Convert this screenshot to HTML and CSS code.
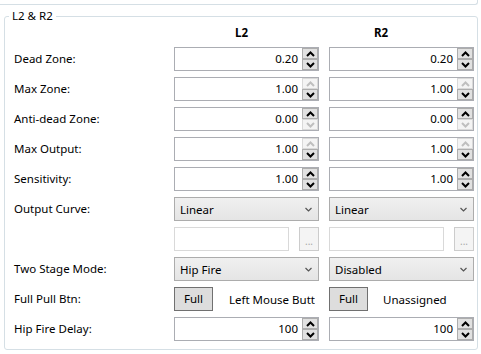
FILE: index.html
```html
<!DOCTYPE html>
<html lang="en">
<head>
  <meta charset="UTF-8" />
  <title>L2 &amp; R2</title>
  <link rel="stylesheet" href="styles.css">
</head>
<body>
  <div class="prev-box"></div>

  <fieldset class="group">
    <legend>L2 &amp; R2</legend>
    <div class="grid">
      <div></div>
      <div class="head head-l">L2</div>
      <div class="head head-r">R2</div>

      <div class="label">Dead Zone:</div>
      <div class="num"><span class="val">0.20</span><span class="spin"><span class="btn"><svg width="9" height="6" viewBox="0 0 9 6"><path d="M1 5 L4.5 1.5 L8 5" fill="none" stroke="currentColor" stroke-width="2"/></svg></span><span class="btn"><svg width="9" height="6" viewBox="0 0 9 6"><path d="M1 1 L4.5 4.5 L8 1" fill="none" stroke="currentColor" stroke-width="2"/></svg></span></span></div>
      <div class="num"><span class="val">0.20</span><span class="spin"><span class="btn"><svg width="9" height="6" viewBox="0 0 9 6"><path d="M1 5 L4.5 1.5 L8 5" fill="none" stroke="currentColor" stroke-width="2"/></svg></span><span class="btn"><svg width="9" height="6" viewBox="0 0 9 6"><path d="M1 1 L4.5 4.5 L8 1" fill="none" stroke="currentColor" stroke-width="2"/></svg></span></span></div>

      <div class="label">Max Zone:</div>
      <div class="num"><span class="val">1.00</span><span class="spin"><span class="btn off"><svg width="9" height="6" viewBox="0 0 9 6"><path d="M1 5 L4.5 1.5 L8 5" fill="none" stroke="currentColor" stroke-width="2"/></svg></span><span class="btn"><svg width="9" height="6" viewBox="0 0 9 6"><path d="M1 1 L4.5 4.5 L8 1" fill="none" stroke="currentColor" stroke-width="2"/></svg></span></span></div>
      <div class="num"><span class="val">1.00</span><span class="spin"><span class="btn off"><svg width="9" height="6" viewBox="0 0 9 6"><path d="M1 5 L4.5 1.5 L8 5" fill="none" stroke="currentColor" stroke-width="2"/></svg></span><span class="btn"><svg width="9" height="6" viewBox="0 0 9 6"><path d="M1 1 L4.5 4.5 L8 1" fill="none" stroke="currentColor" stroke-width="2"/></svg></span></span></div>

      <div class="label">Anti-dead Zone:</div>
      <div class="num"><span class="val">0.00</span><span class="spin"><span class="btn"><svg width="9" height="6" viewBox="0 0 9 6"><path d="M1 5 L4.5 1.5 L8 5" fill="none" stroke="currentColor" stroke-width="2"/></svg></span><span class="btn off"><svg width="9" height="6" viewBox="0 0 9 6"><path d="M1 1 L4.5 4.5 L8 1" fill="none" stroke="currentColor" stroke-width="2"/></svg></span></span></div>
      <div class="num"><span class="val">0.00</span><span class="spin"><span class="btn"><svg width="9" height="6" viewBox="0 0 9 6"><path d="M1 5 L4.5 1.5 L8 5" fill="none" stroke="currentColor" stroke-width="2"/></svg></span><span class="btn off"><svg width="9" height="6" viewBox="0 0 9 6"><path d="M1 1 L4.5 4.5 L8 1" fill="none" stroke="currentColor" stroke-width="2"/></svg></span></span></div>

      <div class="label">Max Output:</div>
      <div class="num"><span class="val">1.00</span><span class="spin"><span class="btn off"><svg width="9" height="6" viewBox="0 0 9 6"><path d="M1 5 L4.5 1.5 L8 5" fill="none" stroke="currentColor" stroke-width="2"/></svg></span><span class="btn"><svg width="9" height="6" viewBox="0 0 9 6"><path d="M1 1 L4.5 4.5 L8 1" fill="none" stroke="currentColor" stroke-width="2"/></svg></span></span></div>
      <div class="num"><span class="val">1.00</span><span class="spin"><span class="btn off"><svg width="9" height="6" viewBox="0 0 9 6"><path d="M1 5 L4.5 1.5 L8 5" fill="none" stroke="currentColor" stroke-width="2"/></svg></span><span class="btn"><svg width="9" height="6" viewBox="0 0 9 6"><path d="M1 1 L4.5 4.5 L8 1" fill="none" stroke="currentColor" stroke-width="2"/></svg></span></span></div>

      <div class="label">Sensitivity:</div>
      <div class="num"><span class="val">1.00</span><span class="spin"><span class="btn"><svg width="9" height="6" viewBox="0 0 9 6"><path d="M1 5 L4.5 1.5 L8 5" fill="none" stroke="currentColor" stroke-width="2"/></svg></span><span class="btn"><svg width="9" height="6" viewBox="0 0 9 6"><path d="M1 1 L4.5 4.5 L8 1" fill="none" stroke="currentColor" stroke-width="2"/></svg></span></span></div>
      <div class="num"><span class="val">1.00</span><span class="spin"><span class="btn"><svg width="9" height="6" viewBox="0 0 9 6"><path d="M1 5 L4.5 1.5 L8 5" fill="none" stroke="currentColor" stroke-width="2"/></svg></span><span class="btn"><svg width="9" height="6" viewBox="0 0 9 6"><path d="M1 1 L4.5 4.5 L8 1" fill="none" stroke="currentColor" stroke-width="2"/></svg></span></span></div>

      <div class="label">Output Curve:</div>
      <div class="combo"><span>Linear</span><svg width="7" height="5" viewBox="0 0 7 5"><path d="M0.5 1 L3.5 4 L6.5 1" fill="none" stroke="#555" stroke-width="1.2"/></svg></div>
      <div class="combo"><span>Linear</span><svg width="7" height="5" viewBox="0 0 7 5"><path d="M0.5 1 L3.5 4 L6.5 1" fill="none" stroke="#555" stroke-width="1.2"/></svg></div>

      <div></div>
      <div class="path-row"><span class="path"></span><span class="browse">...</span></div>
      <div class="path-row"><span class="path"></span><span class="browse">...</span></div>

      <div class="label">Two Stage Mode:</div>
      <div class="combo"><span>Hip Fire</span><svg width="7" height="5" viewBox="0 0 7 5"><path d="M0.5 1 L3.5 4 L6.5 1" fill="none" stroke="#555" stroke-width="1.2"/></svg></div>
      <div class="combo"><span>Disabled</span><svg width="7" height="5" viewBox="0 0 7 5"><path d="M0.5 1 L3.5 4 L6.5 1" fill="none" stroke="#555" stroke-width="1.2"/></svg></div>

      <div class="label">Full Pull Btn:</div>
      <div class="pull"><span class="full-btn">Full</span><span class="pull-text pull-l">Left Mouse Button</span></div>
      <div class="pull"><span class="full-btn">Full</span><span class="pull-text pull-r">Unassigned</span></div>

      <div class="label">Hip Fire Delay:</div>
      <div class="num"><span class="val">100</span><span class="spin"><span class="btn"><svg width="9" height="6" viewBox="0 0 9 6"><path d="M1 5 L4.5 1.5 L8 5" fill="none" stroke="currentColor" stroke-width="2"/></svg></span><span class="btn"><svg width="9" height="6" viewBox="0 0 9 6"><path d="M1 1 L4.5 4.5 L8 1" fill="none" stroke="currentColor" stroke-width="2"/></svg></span></span></div>
      <div class="num"><span class="val">100</span><span class="spin"><span class="btn"><svg width="9" height="6" viewBox="0 0 9 6"><path d="M1 5 L4.5 1.5 L8 5" fill="none" stroke="currentColor" stroke-width="2"/></svg></span><span class="btn"><svg width="9" height="6" viewBox="0 0 9 6"><path d="M1 1 L4.5 4.5 L8 1" fill="none" stroke="currentColor" stroke-width="2"/></svg></span></span></div>
    </div>
  </fieldset>
</body>
</html>
```

FILE: styles.css
```css
body {
  margin: 0;
  font-family: "Noto Sans", sans-serif;
  font-size: 11.5px;
  color: #000;
  background-color: #fff;
}

/* bottom edge of the group box above */
.prev-box {
  width: 477px;
  height: 4px;
  border-right: 1px solid #d5dfe5;
  border-bottom: 1px solid #d5dfe5;
  border-radius: 0 0 3px 0;
}

.group {
  box-sizing: border-box;
  width: 474px;
  margin: 3px 0 0 4px;
  padding: 0 0 8px 0;
  border: 1px solid #d5dfe5;
  border-radius: 3px;
  min-width: 0;
}
.group legend {
  margin-left: 4px;
  padding: 0 3px;
  line-height: 16px;
}

.grid {
  display: grid;
  grid-template-columns: 150px 145px 145px;
  grid-template-rows: 16px repeat(10, 24px);
  column-gap: 10px;
  row-gap: 6px;
  margin-left: 9px;
  padding-top: 1px;
}

.head {
  font-weight: bold;
  line-height: 16px;
}
.head-l { padding-left: 61px; }
.head-r { padding-left: 45px; }

.label {
  align-self: center;
  line-height: 16px;
}

/* numeric up-down */
.num {
  display: flex;
  border: 1px solid #abadb3;
  background-color: #fff;
}
.num .val {
  flex: 1;
  text-align: right;
  padding-right: 4px;
  line-height: 22px;
}
.spin {
  width: 16px;
  display: flex;
  flex-direction: column;
}
.btn {
  flex: 1;
  box-sizing: border-box;
  display: flex;
  align-items: center;
  justify-content: center;
  background-color: #e1e1e1;
  border: 1px solid #adadad;
  color: #000;
}
.btn.off {
  background-color: #f4f4f4;
  border-color: #d9d9d9;
  color: #bfbfbf;
}

/* combo box */
.combo {
  display: flex;
  align-items: center;
  justify-content: space-between;
  border: 1px solid #acacac;
  background: linear-gradient(#f0f0f0, #e5e5e5);
  padding: 0 6px 0 5px;
}

.path-row {
  display: flex;
  justify-content: space-between;
}
.path {
  box-sizing: border-box;
  width: 115px;
  border: 1px solid #d9d9d9;
  background-color: #fff;
}
.browse {
  box-sizing: border-box;
  width: 20px;
  border: 1px solid #cccccc;
  background-color: #f4f4f4;
  color: #a8a8a8;
  font-size: 10px;
  text-align: center;
  line-height: 26px;
}

.pull {
  display: flex;
  align-items: center;
  min-width: 0;
}
.full-btn {
  box-sizing: border-box;
  flex: none;
  width: 39px;
  height: 24px;
  line-height: 22px;
  text-align: center;
  background-color: #dddddd;
  border: 1px solid #707070;
}
.pull-text {
  white-space: nowrap;
  overflow: hidden;
  min-width: 0;
}
.pull-l {
  margin-left: 16px;
  margin-right: 4px;
}
.pull-r {
  margin-left: 15px;
}
```
